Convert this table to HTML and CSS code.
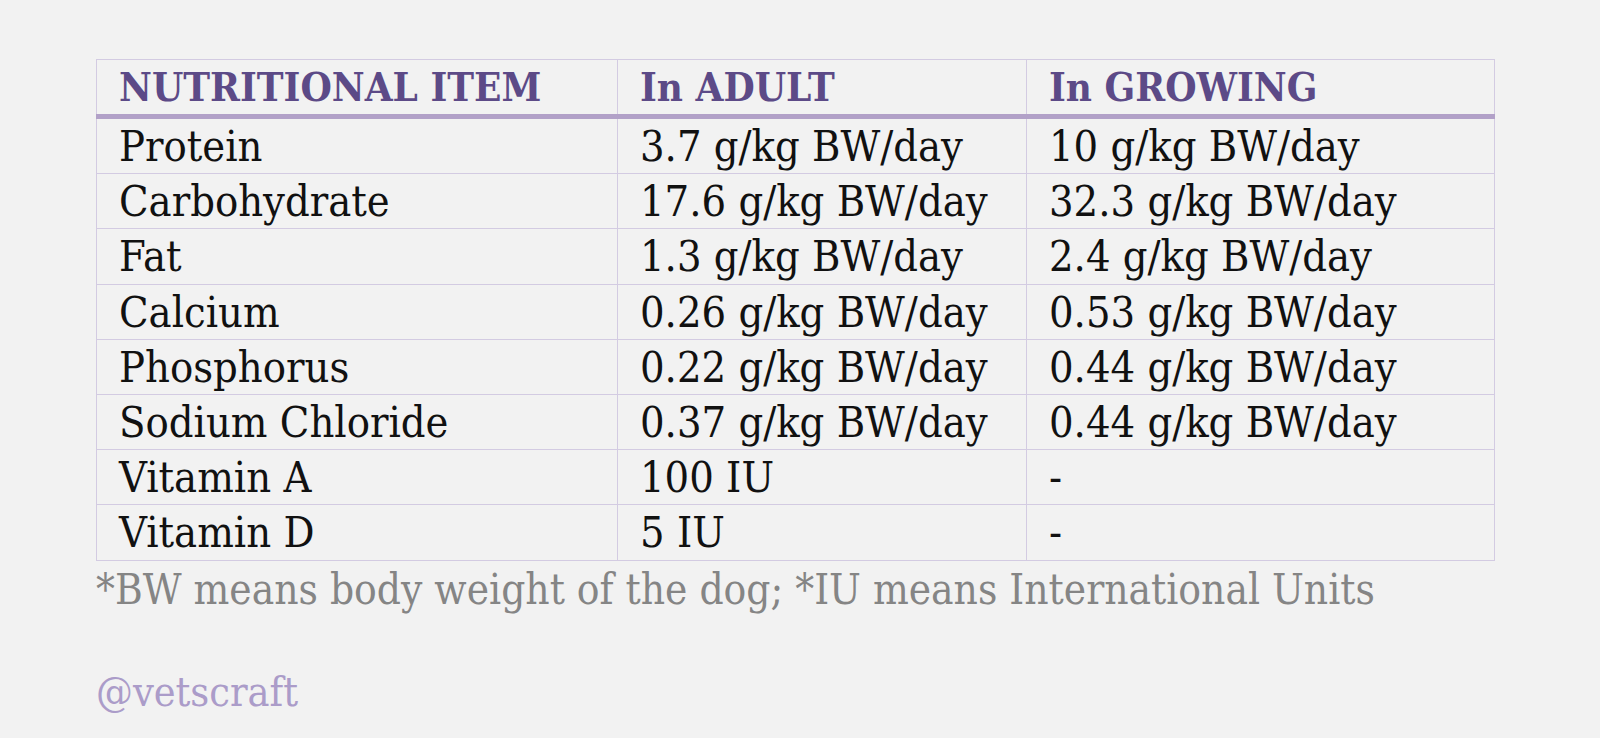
FILE: index.html
```html
<!DOCTYPE html>
<html>
<head>
<meta charset="utf-8">
<link rel="stylesheet" href="styles.css">
</head>
<body>
<main class="page">
  <table class="nutri">
    <thead>
      <tr><th class="c1">NUTRITIONAL ITEM</th><th class="c2">In ADULT</th><th class="c3">In GROWING</th></tr>
    </thead>
    <tbody>
      <tr><td>Protein</td><td>3.7 g/kg BW/day</td><td>10 g/kg BW/day</td></tr>
      <tr><td>Carbohydrate</td><td>17.6 g/kg BW/day</td><td>32.3 g/kg BW/day</td></tr>
      <tr><td>Fat</td><td>1.3 g/kg BW/day</td><td>2.4 g/kg BW/day</td></tr>
      <tr><td>Calcium</td><td>0.26 g/kg BW/day</td><td>0.53 g/kg BW/day</td></tr>
      <tr><td>Phosphorus</td><td>0.22 g/kg BW/day</td><td>0.44 g/kg BW/day</td></tr>
      <tr><td>Sodium Chloride</td><td>0.37 g/kg BW/day</td><td>0.44 g/kg BW/day</td></tr>
      <tr><td>Vitamin A</td><td>100 IU</td><td>-</td></tr>
      <tr><td>Vitamin D</td><td>5 IU</td><td>-</td></tr>
    </tbody>
  </table>
  <p class="note">*BW means body weight of the dog; *IU means International Units</p>
  <p class="handle">@vetscraft</p>
</main>
</body>
</html>
```
FILE: styles.css
```css
html, body {
  margin: 0;
  padding: 0;
  background: #f2f2f2;
}
.page {
  padding: 59px 0 0 96px;
  font-family: "DejaVu Serif Condensed", "DejaVu Serif", serif;
  font-stretch: condensed;
}
.nutri {
  border-collapse: collapse;
  width: 1396px;
  table-layout: fixed;
}
.nutri th, .nutri td {
  border: 1.5px solid #d3cbe2;
  text-align: left;
  padding: 0 0 0 22px;
  white-space: nowrap;
}
.nutri th {
  color: #5c4a87;
  font-weight: bold;
  font-size: 40px;
  height: 54px;
  line-height: 54px;
  border-bottom: 5px solid #b2a1c8;
}
.nutri td {
  color: #111;
  font-size: 43px;
  height: 54.2px;
  line-height: 54px;
}
.c1 { width: 498px; }
.c2 { width: 386px; }
.c3 { width: 445px; }
.note {
  margin: 0;
  color: #858585;
  font-size: 42px;
  line-height: 58px;
}
.handle {
  margin: 48px 0 0;
  color: #ab9cc9;
  font-size: 41px;
  line-height: 50px;
}
```
